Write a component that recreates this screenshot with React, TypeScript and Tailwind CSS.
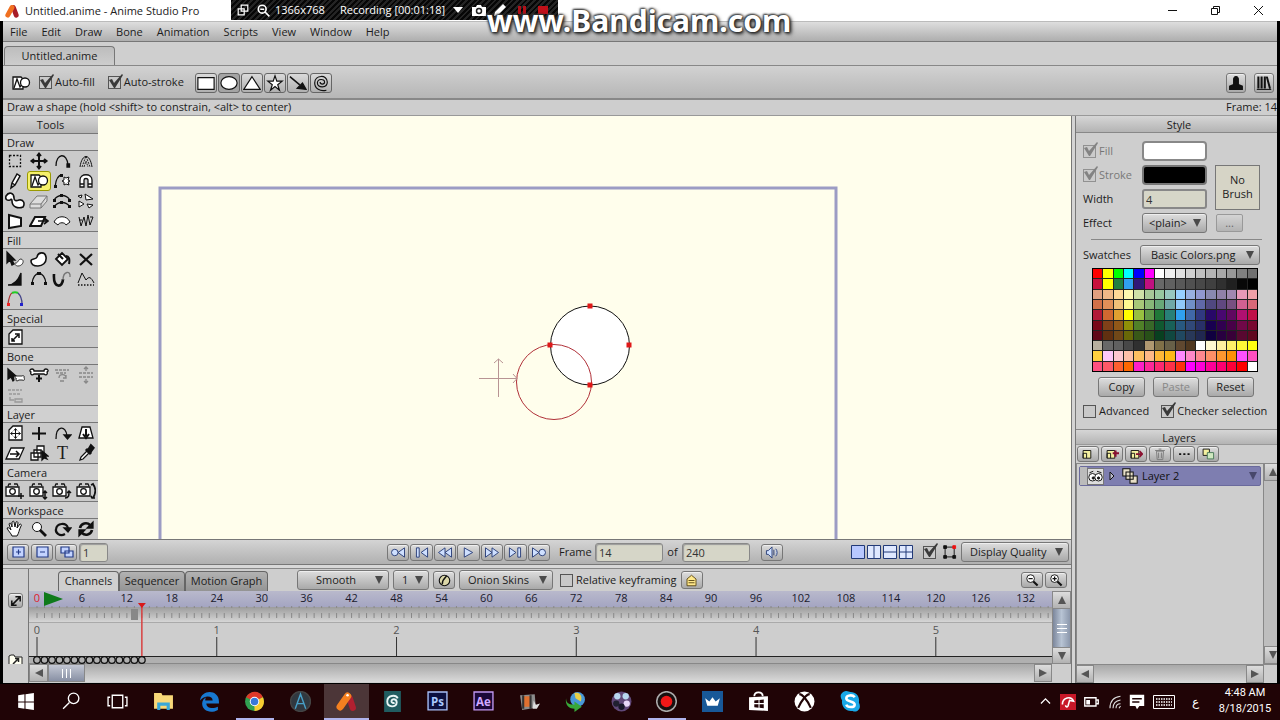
import type { ReactNode } from 'react'
import clsx from 'clsx'

const UI = "font-['Open_Sans','Noto_Sans',sans-serif]"
const RAISED = 'border border-[#777] rounded-[3px] bg-linear-to-b from-[#dedede] to-[#a9a9a9] shadow-[inset_0_1px_0_#eee]'
const HEADER = 'bg-linear-to-b from-[#d6d6d6] to-[#b4b4b4]'

function Svg({ children, className = 'size-5', box = '0 0 20 20' }: { children: ReactNode; className?: string; box?: string }) {
  return (
    <svg viewBox={box} className={clsx('shrink-0', className)} fill="none" stroke="#111" strokeWidth="1.3" aria-hidden="true">
      {children}
    </svg>
  )
}

const shapeGlyph = (
  <>
    <path d="M2 4h8l2 2v10H2z" fill="#fff" />
    <path d="M3 15l3-9 3 8 3-4" />
    <circle cx="14" cy="9.500" r="4.500" fill="#fff" />
  </>
)
const bonePath = 'M3 4c-2 0-3 2-1 3-1 2 1 4 3 2h10c2 2 4 0 3-2 2-1 1-3-1-3-1 0-2 1-2 2H5c0-1-1-2-2-2z'
const camera = (
  <>
    <path d="M1 6h13v9H1zM3 5l1-2h2M9 3h3l1 2" fill="#fff" />
    <circle cx="7.500" cy="10.500" r="2.800" />
  </>
)
const page = <path d="M4 7l4-4h9v14H4z" fill="#fff" />

const GLYPHS: Record<string, ReactNode> = {
  'Select Points': <path d="M4.500 4.500h11v11h-11z" strokeDasharray="2 1.500" />,
  'Transform Points': <path d="M10 3v14M3 10h14M8 5l2-2.500L12 5M8 15l2 2.500 2-2.500M5 8l-2.500 2L5 12M15 8l2.500 2-2.500 2" strokeWidth="2" />,
  'Add Point': <><path d="M4 15C4 2 15 1 16 14" /><path d="M15 13h2.500v3H15z" fill="#111" /></>,
  Curvature: <><path d="M4 16C6 2 14 2 16 16" strokeWidth="1" /><path d="M6 16l4-11 4 11M8 16l2-6 2 6" strokeDasharray="2 1" strokeWidth="0.900" /></>,
  Freehand: <path d="M6 17l1-5 5-9 3 2-5 9zM7 12l3 2" fill="#fff" strokeWidth="1.500" />,
  'Draw Shape': shapeGlyph,
  Scatter: <><path d="M3 16C4 7 6 4 10 4" /><path d="M2 14h3v3H2zM8 3h3v3H8z" fill="#111" stroke="none" /><path d="M12 6l2 1 3-1-1 3 2 1-2 1 1 3-3-1-2 1 0-3-2-1 2-1z" fill="#fff" strokeWidth="1" /></>,
  Magnet: <path d="M4 16V9c0-7 12-7 12 0v7h-4V9c0-2-4-2-4 0v7zM4 13h4M12 13h4" fill="#fff" />,
  'Blob Brush': <path d="M1 5c3-5 8-3 8 2 0 3 2 3 5 2 5-1 6 4 4 7-5 2-11 0-11-6 0-2-1-2-2-1-3 1-5-1-4-4z" fill="#fff" strokeWidth="1.600" />,
  Eraser: <path d="M1 13l7-8h10l-6 8zM1 13v4h11v-4M12 17l6-7V5" fill="#ddd" stroke="#777" strokeWidth="1" />,
  Perspective: <><path d="M2 9c4-6 12-6 16 0M2 16c4-6 12-6 16 0" /><path d="M1 8h3v3H1zM8 3h3v3H8zM16 8h3v3h-3zM1 14h3v3H1zM8 10h3v3H8zM16 14h3v3h-3z" fill="#111" stroke="none" /></>,
  Shatter: <path d="M2 5l4-1-1 3zM9 3l8 5-7 1zM3 10l5 3-5 3zM11 13l6 1-4 3z" fill="#fff" strokeWidth="1" />,
  Shear: <path d="M4 4l12 3v8L4 17z" fill="#fff" strokeWidth="2" />,
  Skew: <><path d="M1 15l5-9h10l-4 9z" fill="#fff" strokeWidth="2" /><path d="M9 10h9M15 7l4 3-4 3" strokeWidth="1.600" /></>,
  Bend: <path d="M2 11c3-7 13-7 16 0l-4 3c-1-3-7-3-8 0z" fill="#fff" strokeWidth="1" />,
  Noise: <path d="M3 6l2 9 3-9 2 9 2-11 2 10 3-8M3 9h3M14 6h3" strokeWidth="1" />,
  'Select Shape': <><path d="M2 3v11l3-3 2 5 2-1-2-4h3z" fill="#111" /><path d="M10 14c3 1 3-4 6-4 4 1 2 7-3 7-2 0-4-2-3-3z" fill="#fff" strokeWidth="0.800" /></>,
  'Create Shape': <path d="M2 12c0-3 5-1 6-4 1-5 8-6 9 0 1 6-4 9-8 9-5 0-7-2-7-5z" fill="#fff" strokeWidth="1.600" />,
  'Paint Bucket': <><path d="M4 10l6-6 6 6-6 6z" fill="#fff" strokeWidth="1.800" /><path d="M6 5l5 5M14 7c3 0 4 3 3 8" strokeWidth="2" /></>,
  'Delete Shape': <path d="M4 5l12 11M16 5L4 16" strokeWidth="2.200" />,
  'Line Width': <path d="M3 16c5 0 10-4 13-12v12z" fill="#111" />,
  'Hide Edge': <><path d="M3 15C4 1 16 1 17 15" /><path d="M2 13h3v3H2zM15 13h3v3h-3zM8 3h4v3H8z" fill="#111" stroke="none" /></>,
  'Stroke Exposure': <><path d="M2 5c-1 15 9 14 9 5" strokeWidth="2.600" /><path d="M11 11c0-9 8-10 7-3" stroke="#777" /></>,
  'Curve Profile': <><path d="M2 14L6 4l4 7c3-4 5-3 8 3" strokeWidth="1" /><path d="M2 16h16" strokeDasharray="1.500 1.500" /></>,
  'Color Points': <><path d="M3 15C4 8 5 5 7 4" stroke="#a33" /><path d="M7 4c2-1 4-1 6 0" stroke="#2c2" strokeWidth="2" /><path d="M13 4c2 2 4 6 4 11" stroke="#448" /><path d="M2 14h3v3H2z" fill="#e22" stroke="none" /><path d="M15 14h3v3h-3z" fill="#22c" stroke="none" /></>,
  'Switch Layer': <>{page}<path d="M7 14l6-6M10 7h4v4M7 11v3h3" strokeWidth="1.500" /></>,
  'Select Bone': <><path d="M3 4v10l3-2 2 4 1-1-1-4h3z" fill="#111" /><path d="M11 11c-2 1-1 2 0 2s-1 3 1 3l2-1h3c3 1 3-1 2-2 1-2-1-3-2-2h-3z" fill="#fff" strokeWidth="0.900" /></>,
  'Add Bone': <><path d={bonePath} fill="#fff" /><path d="M10 10v7M7 13.500h6" strokeWidth="2" /></>,
  'Reparent Bone': <g stroke="#888"><path d="M3 5h14M4 8h10" strokeDasharray="3 1" /><path d="M7 13c0-5 7-4 7 0M14 10v3h-3M8 16h4" /></g>,
  'Bone Strength': <g stroke="#888"><path d="M3 8h14M3 12h14" strokeDasharray="3 1" /><path d="M10 2v4M8 4l2-2 2 2M10 14v4M8 16l2 2 2-2" /></g>,
  'Bind Layer': <g stroke="#999"><path d="M3 5h14M4 9h11" strokeDasharray="3 1" /><path d="M5 12v3h4M10 14h7v3h-7z" /></g>,
  'Transform Layer': <>{page}<path d="M10.500 6v9M6 10.500h9M9 7.500l1.500-2 1.500 2M9 13.500l1.500 2 1.500-2M7.500 9l-2 1.500 2 1.500M13.500 9l2 1.500-2 1.500" strokeWidth="1" /></>,
  'Set Origin': <path d="M10 4v13M3 10.500h14" strokeWidth="2" />,
  'Follow Path': <><path d="M4 16C4 2 14 2 15 13" /><path d="M12 12h7l-3.500 4z" fill="#111" /></>,
  'Rotate Layer': <><path d="M3 15L6 4h8l3 11z" fill="#fff" /><path d="M10 6v7M7 11l3 4 3-4" strokeWidth="2" /></>,
  'Shear Layer': <><path d="M1 16L6 5h13l-5 11z" fill="#fff" /><path d="M5 11h9M11 8l3 3-3 3" strokeWidth="1.500" /></>,
  'Layer Selector': <><path d="M2 10h7v7H2zM5 7h7v7H5zM8 3h7v7H8z" fill="#fff" /><path d="M13 8v9l2-2 3 1-2-3h3z" fill="#111" /></>,
  Eyedropper: <><path d="M4 17l1-3 6-6 2 2-6 6z" fill="#fff" /><path d="M10 6l5 5M12 8l3-5 2 2-3 4z" strokeWidth="3" /></>,
  'Track Camera': <>{camera}<path d="M16 12v6M13 15h6" strokeWidth="1.500" /></>,
  'Zoom Camera': <>{camera}<path d="M16 10v8M14 12l2-2 2 2M14 16l2 2 2-2" strokeWidth="1.500" /></>,
  'Roll Camera': <>{camera}<path d="M13 17c4 0 4-3 4-6M15 12l2-2 2 2" strokeWidth="1.500" /></>,
  'Pan/Tilt Camera': <>{camera}<path d="M17 3c3 4 3 9 0 14M15 4l2-1 1 2M15 15l1 2 3 0" strokeWidth="1.700" /></>,
  Pan: <path d="M7 17c-1-3-4-5-5-8 2-1 3 1 4 2L4 5c1-2 2-1 3 3l0-5c1-1 2-1 2 0l1 5 1-5c1-1 2 0 2 1l-1 5 3-4c1 0 2 1 1 2-2 4-2 7-4 10z" fill="#fff" strokeWidth="1" />,
  Zoom: <><circle cx="8" cy="8" r="4.500" fill="#fff" strokeWidth="1" /><path d="M11 11l6 6" strokeWidth="2.800" /></>,
  'Rotate Workspace': <><path d="M13 15c-5 3-10-1-9-5 1-6 10-7 12-1" strokeWidth="2.200" /><path d="M12 9h7l-3 4z" fill="#111" /></>,
  Orbit: <><path d="M4 9c1-5 7-6 10-3M16 11c-1 5-7 6-10 3" strokeWidth="2.600" /><path d="M17 3v6h-6zM3 17v-6h6z" fill="#111" /></>,
}

const TOOL_GROUPS = [
  { title: 'Draw', tools: ['Select Points', 'Transform Points', 'Add Point', 'Curvature', 'Freehand', 'Draw Shape', 'Scatter', 'Magnet', 'Blob Brush', 'Eraser', 'Perspective', 'Shatter', 'Shear', 'Skew', 'Bend', 'Noise'] },
  { title: 'Fill', tools: ['Select Shape', 'Create Shape', 'Paint Bucket', 'Delete Shape', 'Line Width', 'Hide Edge', 'Stroke Exposure', 'Curve Profile', 'Color Points'] },
  { title: 'Special', tools: ['Switch Layer'] },
  { title: 'Bone', tools: ['Select Bone', 'Add Bone', 'Reparent Bone', 'Bone Strength', 'Bind Layer'] },
  { title: 'Layer', tools: ['Transform Layer', 'Set Origin', 'Follow Path', 'Rotate Layer', 'Shear Layer', 'Layer Selector', 'Text', 'Eyedropper'] },
  { title: 'Camera', tools: ['Track Camera', 'Zoom Camera', 'Roll Camera', 'Pan/Tilt Camera'] },
  { title: 'Workspace', tools: ['Pan', 'Zoom', 'Rotate Workspace', 'Orbit'] },
]

const SWATCHES = [
  'ff0000 ffff00 00ff00 00ffff 0000ff ff00ff ffffff eeeeee e0e0e0 d0d0d0 c0c0c0 b4b4b4 a8a8a8 989898 808080 707070',
  'c8103c ffff00 208040 30a0f0 301878 c01080 686868 606060 585858 505050 484848 404040 303030 202020 080808 000000',
  'e0a080 f0b888 ffd898 fff8b0 d0e0a8 a8c898 98c8a0 98c8c0 98d0ff 98b0e0 9098d0 8888b0 9080a8 a088b0 e898b8 f0a0a8',
  'd07048 e09058 f0c078 fff890 a8c878 88b878 68a878 70a8a8 90c8f8 7090c8 6068a8 504880 604880 785080 d06090 d86878',
  'b01838 d06830 e0a030 ffff00 98c040 609848 207838 288078 30a0f0 4068a8 303880 280868 480870 600860 b01070 c01048',
  '780818 804018 905818 909008 508028 386828 105830 186058 285880 304878 283068 180050 300050 480048 700848 780830',
  '600818 603010 704818 686808 385818 285018 084020 104840 204860 283858 202850 100040 280040 380038 580830 600820',
  'b8b0a0 686868 606060 484848 303030 b09870 807048 686048 604830 503820 ffffff fff8d0 fff0a0 fff068 fff838 ffff10',
  'ffd040 ffc8f8 ffc8d0 ffc0a8 ffc060 ffb888 ffb838 ffb818 ff88ff ff88c8 ff8890 ff9068 ff9830 ff9008 ff50ff ff50c0',
  'ff5080 ff5868 ff6030 ff6800 ff20c8 ff2898 ff2870 ff3048 ff3010 ff00ff ff00d8 ff0098 ff0070 ff0038 ff0000 ffffff',
].flatMap(row => row.split(' '))

const MENUS = ['File', 'Edit', 'Draw', 'Bone', 'Animation', 'Scripts', 'View', 'Window', 'Help']

function Check({ id, label, checked = false, disabled = false }: { id: string; label?: string; checked?: boolean; disabled?: boolean }) {
  return (
    <span className={clsx('flex items-center', disabled && 'opacity-50')}>
      <span className="relative flex size-4 items-center">
        <input id={id} type="checkbox" defaultChecked={checked} aria-label={label ? undefined : id} className="peer size-[13px] appearance-none border border-[#555] bg-[#c9c9c9]" />
        <svg viewBox="0 0 16 16" className="pointer-events-none absolute -top-px left-0 hidden size-4 peer-checked:block" fill="#3a3a3a" aria-hidden="true">
          <path d="M1 6l3-1 2 4 8-9 1 1-8 13H6z" />
        </svg>
      </span>
      {label && <label htmlFor={id} className="whitespace-nowrap">{label}</label>}
    </span>
  )
}

function Dropdown({ label, text, className, pad = 'pl-2' }: { label: string; text: string; className: string; pad?: string }) {
  return (
    <span className={clsx('relative flex h-5 shrink-0', className)}>
      <select aria-label={label} className={clsx(RAISED, pad, 'w-full appearance-none text-[11px] leading-4')}>
        <option>{text}</option>
      </select>
      <svg viewBox="0 0 8 8" className="pointer-events-none absolute top-[6px] right-[6px] size-2" fill="#4a4a4a" aria-hidden="true"><path d="M0 0h8L4 8z" /></svg>
    </span>
  )
}

function IconButton({ label, children, className = 'h-[18px] w-[22px]' }: { label: string; children: ReactNode; className?: string }) {
  return <button type="button" aria-label={label} className={clsx(RAISED, 'flex shrink-0 items-center justify-center', className)}>{children}</button>
}

function NumberBox({ label, value, className }: { label: string; value: string; className: string }) {
  return <input aria-label={label} defaultValue={value} className={clsx('h-[19px] rounded-[3px] border border-[#888] bg-[#d6d6c8] px-[3px] text-[11px] text-[#333] shadow-[inset_1px_1px_1px_#999]', className)} />
}

function Arrow({ dir, className }: { dir: 'up' | 'down' | 'left' | 'right'; className: string }) {
  const d = { up: 'M4 0l4 8H0z', down: 'M0 0h8L4 8z', left: 'M8 0v8L0 4z', right: 'M0 0l8 4-8 4z' }[dir]
  return (
    <button type="button" aria-label={`Scroll ${dir}`} className={clsx('flex shrink-0 items-center justify-center border border-[#888] bg-linear-to-b from-[#ddd] to-[#b2b2b2]', className)}>
      <svg viewBox="0 0 8 8" className="size-2" fill="#555" aria-hidden="true"><path d={d} /></svg>
    </button>
  )
}

function TitleBar() {
  return (
    <header className="relative flex h-[21px] shrink-0 items-center bg-white pr-4 pl-[5px]">
      <Svg className="mr-[6px] size-[14px]">
        <path d="M12 5l4 11" stroke="#a81c28" strokeWidth="7" strokeLinecap="round" />
        <path d="M10 5l-6 11" stroke="#f07020" strokeWidth="7" strokeLinecap="round" />
      </Svg>
      <h1 className="pt-px text-[11px] text-[#222]">Untitled.anime - Anime Studio Pro</h1>
      <div className="ml-auto flex items-center gap-8">
        <button type="button" aria-label="Minimize" className="size-[11px]"><Svg className="size-[11px]" box="0 0 11 11"><path d="M1 5.500h9" strokeWidth="1" /></Svg></button>
        <button type="button" aria-label="Restore" className="size-[11px]"><Svg className="size-[11px]" box="0 0 11 11"><path d="M1.500 3.500h6v6h-6zM3.500 3V1.500h6v6H8" strokeWidth="1" /></Svg></button>
        <button type="button" aria-label="Close" className="size-[11px]"><Svg className="size-[11px]" box="0 0 11 11"><path d="M1 1l9 9M10 1l-9 9" strokeWidth="1" /></Svg></button>
      </div>

      {/* Recorder strip floating over the window title */}
      <div className="absolute top-0 left-[231px] flex h-5 w-[327px] items-center bg-[repeating-linear-gradient(135deg,#060606_0_2px,#242424_2px_4px)] pl-[6px] text-[11px] text-white">
        <Svg className="size-[12px]"><g stroke="#fff" strokeWidth="2"><path d="M7 2h11v10H7z" /><path d="M2 8h10v10H2z" /></g></Svg>
        <Svg className="ml-2 size-[13px]"><g stroke="#fff" strokeWidth="2.500"><circle cx="8" cy="8" r="6" /><path d="M12 12l7 7M5 8h6" /></g></Svg>
        <span className="ml-[5px] w-[65px] pt-px">1366x768</span>
        <span className="w-[113px] pt-px whitespace-nowrap">Recording [00:01:18]</span>
        <svg viewBox="0 0 10 6" className="h-[6px] w-[10px]" fill="#fff" aria-hidden="true"><path d="M0 0h10L5 6z" /></svg>
        <svg viewBox="0 0 14 11" className="ml-[9px] h-[11px] w-[14px]" aria-hidden="true"><path d="M0 2h4l1-2h4l1 2h4v9H0z" fill="#fff" /><circle cx="7" cy="6" r="2.500" fill="none" stroke="#222" strokeWidth="1.500" /></svg>
        <svg viewBox="0 0 12 12" className="ml-2 size-3" aria-hidden="true"><path d="M0 12l1-4 8-8 3 3-8 8z" fill="#fff" /></svg>
        <svg viewBox="0 0 8 8" className="ml-3 size-2" aria-hidden="true"><path d="M0 0h3v8H0zM5 0h3v8H5z" fill="#b01018" /></svg>
        <svg viewBox="0 0 10 8" className="ml-3 h-2 w-[10px]" aria-hidden="true"><path d="M0 0h10v8H0z" fill="#c01018" /></svg>
      </div>
      <p className="absolute top-1 left-[487px] z-10 font-['Noto_Sans','Open_Sans',sans-serif] text-[30px] leading-[34px] font-bold text-white [text-shadow:0_0_3px_#222,1px_1px_3px_#222,2px_2px_4px_#444,-1px_-1px_2px_#555]">www.Bandicam.com</p>
    </header>
  )
}

function Toolbar() {
  const shapes = [
    { name: 'Rectangle', art: <path d="M1 4h18v13H1z" fill="#fff" /> },
    { name: 'Oval', art: <ellipse cx="10" cy="10" rx="9" ry="7" fill="#fff" /> },
    { name: 'Triangle', art: <path d="M10 3l9 14H1z" fill="#fff" /> },
    { name: 'Star', art: <path d="M10 2l2 6h6l-5 4 2 6-5-4-5 4 2-6-5-4h6z" fill="#fff" /> },
    { name: 'Arrow', art: <><path d="M1 3l11 9" strokeWidth="1.700" /><path d="M19 17l-10-1 6-6z" fill="#111" /></> },
    { name: 'Spiral', art: <path d="M16 18c-7 2-13-2-13-8C3 1 17 0 17 9c0 7-11 7-11 1 0-5 8-5 8-1 0 3-5 3-5 0" /> },
  ]
  return (
    <div className="flex h-[34px] shrink-0 items-center border-b-2 border-[#888] bg-linear-to-b from-[#d2d2d2] to-[#b6b6b6] pt-px pr-[3px] pl-2 text-[11px]">
      <Svg className="mr-2 size-5">{shapeGlyph}</Svg>
      <Check id="auto-fill" label="Auto-fill" checked />
      <span className="w-[13px]" />
      <Check id="auto-stroke" label="Auto-stroke" checked />
      <div className="ml-[11px] flex gap-px">
        {shapes.map(s => (
          <button
            key={s.name}
            type="button"
            aria-label={s.name}
            className={clsx('flex h-5 w-[22px] items-center justify-center rounded-[3px] border border-[#666]', s.name === 'Oval' ? 'bg-[#a4a4a4]' : 'bg-linear-to-b from-[#dadada] to-[#b0b0b0]')}
          >
            <Svg className="size-[18px]">{s.art}</Svg>
          </button>
        ))}
      </div>
      <div className="ml-auto flex gap-2">
        <IconButton label="Character wizard" className="size-5">
          <Svg className="size-4"><path d="M2 18v-4l5-2V7c-1-7 7-7 6 0v5l5 2v4z" fill="#111" /></Svg>
        </IconButton>
        <IconButton label="Library" className="size-5">
          <Svg className="size-4"><path d="M1 18h18" /><path d="M3 2v15M7 2v15M11 2v15" strokeWidth="2.600" /><path d="M14 2l4 15M17 17L13 2" strokeWidth="1.500" /></Svg>
        </IconButton>
      </div>
    </div>
  )
}

function ToolPanel() {
  return (
    <aside className="w-[95px] shrink-0 bg-[#cacaca] text-[11px] shadow-[1px_0_0_#888]">
      <h2 className={clsx(HEADER, 'h-[17px] text-center leading-[18px]')}>Tools</h2>
      {TOOL_GROUPS.map(group => (
        <section key={group.title}>
          <h3 className="h-[18px] border-y border-[#777] bg-[#d0d0d0] pl-1 leading-[18px]">{group.title}</h3>
          <div className="grid grid-cols-4">
            {group.tools.map(tool => (
              <button
                key={tool}
                type="button"
                aria-label={tool === 'Text' ? undefined : tool}
                className={clsx('flex h-5 items-center justify-center rounded-[3px]', tool === 'Draw Shape' && 'border border-[#999900] bg-[#f5f06c]')}
              >
                {tool === 'Text'
                  ? <span className="font-['Liberation_Serif',serif] text-[18px] leading-5">T</span>
                  : <Svg>{GLYPHS[tool]}</Svg>}
              </button>
            ))}
          </div>
        </section>
      ))}
    </aside>
  )
}

function Canvas() {
  const points = [[492, 190], [452, 229], [531, 229], [492, 269]]
  return (
    <main className="relative flex-1 overflow-hidden bg-[#fffeec]">
      <svg className="absolute inset-0 h-full w-full" fill="none" aria-label="Artwork">
        <rect x="62" y="72" width="676" height="500" stroke="#9c9cc4" strokeWidth="3" />
        <circle cx="492" cy="229.500" r="39.500" fill="#fff" stroke="#111" />
        <circle cx="456" cy="266" r="37.500" stroke="#b03038" />
        <path d="M381 262.500h38M415 258l4 4.500-4 4.500M400.500 281v-38M396 247l4.500-4 4.500 4" stroke="#b89494" />
        {points.map(([x, y]) => <rect key={`${x}-${y}`} x={x - 2.5} y={y - 2.5} width="5" height="5" fill="#e01818" />)}
      </svg>
    </main>
  )
}

function PlaybackBar() {
  const transport = [
    { name: 'Rewind', d: 'M15 2v10L8 7z', extra: <circle cx="4.500" cy="7" r="3.500" /> },
    { name: 'Previous keyframe', d: 'M2 2h3v10H2zM14 2v10L7 7z' },
    { name: 'Step back', d: 'M8 2v10L1 7zM15 2v10L8 7z' },
    { name: 'Play', d: 'M4 2l9 5-9 5z' },
    { name: 'Step forward', d: 'M1 2l7 5-7 5zM8 2l7 5-7 5z' },
    { name: 'Next keyframe', d: 'M2 2l7 5-7 5zM11 2h3v10h-3z' },
    { name: 'Jump to end', d: 'M1 2l7 5-7 5z', extra: <circle cx="11.500" cy="7" r="3.500" /> },
  ]
  const views = ['', 'M7 1v12', 'M1 7h12', 'M7 1v12M1 7h12']
  return (
    <div className="flex h-[26px] shrink-0 items-center border-y border-[#777] bg-linear-to-b from-[#d4d4d4] to-[#b0b0b0] pr-[2px] pl-1 text-[11px]">
      <div className="flex items-center gap-[2px]">
        {[['Add', 'M2 1h11v10H2zM5 6h5M7.500 3.500v5'], ['Remove', 'M2 1h11v10H2zM5 6h5'], ['Duplicate', 'M2 1h8v6H2zM6 5h8v6H6z']].map(([name, d]) => (
          <IconButton key={name} label={name} className="h-[17px] w-[22px]">
            <svg viewBox="0 0 15 12" className="h-3 w-[15px]" fill="#c4d4ff" stroke="#223a88" strokeWidth="1.200" aria-hidden="true"><path d={d} /></svg>
          </IconButton>
        ))}
        <NumberBox label="Page" value="1" className="w-[29px]" />
      </div>
      <div className="ml-[279px] flex items-center">
        <div className="grid w-[163px] grid-cols-7 gap-px">
          {transport.map(b => (
            <IconButton key={b.name} label={b.name} className="h-[17px]">
              <svg viewBox="0 0 16 14" className="h-[13px] w-4" fill="#cfe0ff" stroke="#283c78" aria-hidden="true"><path d={b.d} />{b.extra}</svg>
            </IconButton>
          ))}
        </div>
        <span className="ml-[9px] w-9">Frame</span>
        <NumberBox label="Current frame" value="14" className="w-[68px]" />
        <span className="w-[19px] text-center">of</span>
        <NumberBox label="Total frames" value="240" className="w-[68px]" />
        <span className="w-[11px]" />
        <IconButton label="Sound" className="h-[17px] w-[22px]">
          <svg viewBox="0 0 16 14" className="h-[13px] w-4" fill="#cfe0ff" stroke="#283c78" aria-hidden="true"><path d="M2 5h2l4-4v12L4 9H2zM10 4v6M12 3c2 2 2 6 0 8" /></svg>
        </IconButton>
      </div>
      <div className="ml-auto flex items-center">
        <div className="flex gap-[2px]">
          {views.map((d, i) => (
            <button key={d} type="button" aria-label={`View layout ${i + 1}`} className="size-[14px]">
              <svg viewBox="0 0 14 14" className="size-[14px]" stroke="#223a78" fill={i === 0 ? '#b8c8ff' : '#dfe8ff'} aria-hidden="true"><path d="M0.500 0.500h13v13h-13z" /><path d={d} /></svg>
            </button>
          ))}
        </div>
        <span className="w-[10px]" />
        <Check id="Show path" checked />
        <Svg className="mx-1 size-[14px]"><path d="M3 3h13v14H3z" /><path d="M1 1h4v4H1zM1 15h4v4H1zM14 15h4v4h-4z" fill="#111" /><path d="M14 1h4v4h-4z" fill="#e11" stroke="#e11" /></Svg>
        <Dropdown label="Display quality" text="Display Quality" className="w-[108px]" />
      </div>
    </div>
  )
}

function Ruler() {
  const x = (frame: number) => 8 + frame * 7.49
  const frames = Array.from({ length: 137 }, (_, i) => i)
  return (
    <svg className="h-[73px] min-w-0 flex-1 text-[11px]" aria-label="Timeline">
      <defs>
        <linearGradient id="band" x1="0" x2="0" y1="0" y2="1">
          <stop offset="0" stopColor="#b9b9cc" />
          <stop offset="1" stopColor="#a4a5c2" />
        </linearGradient>
        <linearGradient id="ticks" x1="0" x2="0" y1="0" y2="1">
          <stop offset="0" stopColor="#9c9c9c" />
          <stop offset="1" stopColor="#d6d6d6" />
        </linearGradient>
      </defs>
      <rect width="100%" height="16" fill="url(#band)" />
      <rect y="16" width="100%" height="15" fill="url(#ticks)" />
      <rect y="31" width="100%" height="1" fill="#aaa" />
      <rect y="66" width="100%" height="7" fill="#b0b0b0" />
      <rect y="65" width="100%" height="1" fill="#222" />
      <rect y="72" width="100%" height="1" fill="#888" />
      {frames.map(f => (
        <path key={f} d={`M${x(f)} 15v2M${x(f)} 22v5`} stroke="#888" />
      ))}
      {frames.filter(f => f % 6 === 0 && f <= 132).map(f => (
        <text key={f} x={x(f)} y="11" textAnchor="middle" fill={f === 0 ? '#e0202c' : '#1a1a2c'}>{f}</text>
      ))}
      {[0, 1, 2, 3, 4, 5].map(s => (
        <g key={s}>
          <text x={x(s * 24)} y="43" textAnchor="middle" fill="#555">{s}</text>
          <path d={`M${x(s * 24)} 46v19`} stroke="#333" />
        </g>
      ))}
      <path d="M15 1l19 7-19 7z" fill="#0f7a1c" />
      <rect x="102" y="18" width="7" height="11" fill="#888" />
      {frames.slice(0, 15).map(f => (
        <circle key={f} cx={x(f)} cy="69" r="3.300" fill="#b0b0b0" stroke="#111" strokeWidth="1.300" />
      ))}
      <path d={`M${x(14)} 15v50`} stroke="#d84040" strokeWidth="1.500" />
      <path d={`M${x(14) - 4} 12h8l-4 5z`} fill="#d81818" />
    </svg>
  )
}

function Timeline() {
  return (
    <div className="flex h-[115px] shrink-0 border-t border-[#888] text-[11px]">
      <div className="flex w-[26px] shrink-0 flex-col items-center justify-between border-r border-[#777] pt-[24px] pb-[19px]">
        <IconButton label="Expand timeline" className="size-[15px]">
          <Svg className="size-3"><path d="M4 16L16 4M9 3h8v8M3 9v8h8" strokeWidth="2.500" /></Svg>
        </IconButton>
        <svg viewBox="0 0 15 10" className="h-[10px] w-[15px]" fill="#fffff0" stroke="#222" aria-hidden="true"><path d="M1 12V2l2-1h3l1 2h7v9" /><path d="M5 10l5-5M7 4.500h3.500V8" strokeWidth="1.500" /></svg>
      </div>
      <div className="flex min-w-0 flex-1 flex-col">
        <div className="flex h-[22px] shrink-0 items-center pr-1">
          <div className="ml-[29px] flex h-full items-end" role="tablist">
            {['Channels', 'Sequencer', 'Motion Graph'].map((tab, i) => (
              <button
                key={tab}
                type="button"
                role="tab"
                aria-selected={i === 0}
                className={clsx(
                  'h-5 rounded-t-[4px] border border-b-0 border-[#666] whitespace-nowrap',
                  i === 0 ? 'w-[61px] bg-[#cfcfcf]' : 'bg-linear-to-b from-[#b2b2b2] to-[#949494]',
                  i === 1 && 'w-[66px]',
                  i === 2 && 'w-[83px]',
                )}
              >
                {tab}
              </button>
            ))}
          </div>
          <div className="ml-[29px] flex items-center gap-1">
            <Dropdown label="Interpolation" text="Smooth" className="w-[92px]" pad="pl-[18px]" />
            <Dropdown label="Interval" text="1" className="w-9" />
            <IconButton label="Onion skin toggle">
              <Svg className="size-[15px]"><circle cx="10" cy="10" r="7" fill="#dcd8a8" strokeWidth="1.500" /><path d="M7 15c0-6 3-8 6-11" strokeWidth="2" /></Svg>
            </IconButton>
            <Dropdown label="Onion skins" text="Onion Skins" className="w-[94px]" />
          </div>
          <span className="w-[7px]" />
          <Check id="relative" label="Relative keyframing" />
          <span className="w-1" />
          <IconButton label="Key settings">
            <Svg className="size-[15px]"><path d="M4 8l6-5 6 5v9H4zM6 10h8M6 13h8" fill="#ffe88a" stroke="#64501c" /></Svg>
          </IconButton>
          <div className="ml-auto flex gap-[2px]">
            {['Zoom out', 'Zoom in'].map(name => (
              <IconButton key={name} label={name} className="h-4 w-[22px]">
                <Svg className="size-[14px]"><circle cx="8" cy="8" r="5.500" fill="#fff" /><path d="M12 12l6 6" strokeWidth="3" /><path d={name === 'Zoom in' ? 'M5 8h6M8 5v6' : 'M5 8h6'} strokeWidth="1.800" /></Svg>
              </IconButton>
            ))}
          </div>
        </div>
        <div className="flex">
          <Ruler />
          <div className="flex w-[19px] flex-col">
            <Arrow dir="up" className="h-[18px] w-full" />
            <div className="flex flex-1 flex-col items-center justify-center gap-[3px] border-x border-[#888] bg-linear-to-r from-[#7c879c] via-[#b8c4d4] to-[#8c98ac]">
              <i className="h-px w-[10px] bg-white" /><i className="h-px w-[10px] bg-white" /><i className="h-px w-[10px] bg-white" />
            </div>
            <Arrow dir="down" className="h-[17px] w-full" />
          </div>
        </div>
        <div className="flex h-[18px] pr-[19px]">
          <Arrow dir="left" className="w-[19px]" />
          <div className="flex flex-1 bg-linear-to-b from-[#a8a8a8] to-[#dadada]">
            <div className="flex w-[37px] items-center justify-center gap-[3px] border border-[#888] bg-linear-to-b from-[#c4c8d4] to-[#8890a4]">
              <i className="h-[9px] w-px bg-white" /><i className="h-[9px] w-px bg-white" /><i className="h-[9px] w-px bg-white" />
            </div>
          </div>
          <Arrow dir="right" className="w-[18px]" />
        </div>
      </div>
    </div>
  )
}

function StylePanel() {
  return (
    <section className="flex flex-col text-[11px]">
      <h2 className={clsx(HEADER, 'h-[17px] border-b border-[#888] pl-[5px] text-center leading-[18px]')}>Style</h2>
      <div className="flex flex-col px-[7px] pt-[6px]">
        <div className="grid auto-rows-[24px] grid-cols-[59px_65px_54px] items-center">
          <Check id="fill" label="Fill" checked disabled />
          <button type="button" aria-label="Fill colour" className="h-5 rounded-[4px] border-2 border-[#888] bg-white" />
          <span />
          <Check id="stroke" label="Stroke" checked disabled />
          <button type="button" aria-label="Stroke colour" className="h-5 rounded-[4px] border-2 border-[#777] bg-black" />
          <button type="button" className="row-span-2 ml-2 h-[45px] w-[45px] border border-[#777] bg-[#d6d4c6] leading-[14px]">No Brush</button>
          <label htmlFor="width">Width</label>
          <input id="width" defaultValue="4" className="h-5 w-full rounded-[3px] border-2 border-[#888] bg-[#d6d6c8] px-[2px] text-[#333]" />
          <span>Effect</span>
          <Dropdown label="Effect" text="<plain>" className="w-full" pad="pl-[6px]" />
          <button type="button" className="ml-[9px] h-[18px] w-[27px] rounded-[2px] border border-[#999] bg-linear-to-b from-[#d4d4d4] to-[#b4b4b4] leading-[12px] text-[#666]">...</button>
        </div>
        <hr className="mx-2 mt-1 mb-[5px] border-[#888]" />
        <div className="flex items-center justify-between pr-[10px]">
          <span>Swatches</span>
          <Dropdown label="Swatches" text="Basic Colors.png" className="w-[120px]" pad="pl-[10px]" />
        </div>
        <div className="mt-[3px] ml-[9px] grid h-[104px] w-[166px] grid-cols-16 grid-rows-10 gap-px border border-black bg-[#222]">
          {SWATCHES.map((color, i) => (
            <button key={i} type="button" aria-label={`#${color}`} style={{ backgroundColor: `#${color}` }} />
          ))}
        </div>
        <div className="mt-[5px] ml-[15px] flex gap-2">
          <button type="button" className={clsx(RAISED, 'h-5 w-[47px] border-[#555]')}>Copy</button>
          <button type="button" disabled className={clsx(RAISED, 'h-5 w-[46px] text-[#888]')}>Paste</button>
          <button type="button" className={clsx(RAISED, 'h-5 w-[47px] border-[#555]')}>Reset</button>
        </div>
        <div className="mt-[6px] mb-[10px] flex h-4 gap-3">
          <Check id="advanced" label="Advanced" />
          <Check id="checker" label="Checker selection" checked />
        </div>
      </div>
    </section>
  )
}

function LayersPanel() {
  const sheet = <path d="M3 5h11v11H3zM3 16V9h5v7" fill="#f4f0a0" />
  const actions = [
    { name: 'New layer', art: sheet },
    { name: 'Add layer', art: <>{sheet}<path d="M15 5v9M11 9h9" stroke="#8a1030" strokeWidth="3" /></> },
    { name: 'Insert layer', art: <>{sheet}<path d="M10 10h9M15 6l4 4-4 4" stroke="#8a1030" strokeWidth="2.500" /></> },
    { name: 'Delete layer', art: <g stroke="#777"><path d="M5 6h10l-1 12H6zM3 5h14M8 3h4M8 8v8M12 8v8" /></g> },
    { name: 'More', art: <path d="M3 10h3M9 10h3M15 10h3" strokeWidth="2.500" /> },
    { name: 'Duplicate layer', art: <><path d="M3 3h9v9H3z" fill="#f4f0a0" /><path d="M9 8h9v9H9z" fill="#cfe8c0" stroke="#475" /></> },
  ]
  return (
    <section className="flex flex-1 flex-col border-t border-[#888] text-[11px]">
      <h2 className={clsx(HEADER, 'h-[15px] border-b border-[#999] pl-[5px] text-center leading-[15px]')}>Layers</h2>
      <div className="flex gap-[2px] py-px pl-px">
        {actions.map(a => (
          <IconButton key={a.name} label={a.name} className="h-4 w-[22px]"><Svg className="size-[14px]">{a.art}</Svg></IconButton>
        ))}
      </div>
      <div className="flex flex-1">
        <div className="flex-1 border-t border-l border-[#888] bg-[#cecece] px-[2px] pt-[2px]">
          <div className="flex h-5 items-center rounded-[2px] border border-[#6a6a9c] bg-[#7e7eb0]">
            <span className="h-full w-[7px] bg-[#bbb]" />
            <button type="button" aria-label="Layer visibility" className="flex size-[17px] items-center justify-center border border-[#777] bg-[#ddd]">
              <Svg className="size-[15px]"><ellipse cx="6" cy="11" rx="5" ry="5" fill="#fff" /><ellipse cx="14" cy="11" rx="5" ry="5" fill="#fff" /><circle cx="7" cy="12" r="1.500" fill="#111" /><circle cx="14" cy="12" r="1.500" fill="#111" /><path d="M2 5l5-2M12 3l6 2" /></Svg>
            </button>
            <svg viewBox="0 0 6 10" className="ml-[5px] h-[10px] w-[6px]" stroke="#111" fill="#bbc" aria-hidden="true"><path d="M1 1l4 4-4 4z" /></svg>
            <Svg className="ml-[7px] size-4"><path d="M1 1h9v9H1zM5 5h9v9H5zM10 10h9v9h-9z" fill="#e8e0c8" /></Svg>
            <span className="ml-1 flex-1 text-[#111]">Layer 2</span>
            <svg viewBox="0 0 8 8" className="mr-[3px] size-2" fill="#48486c" aria-hidden="true"><path d="M0 0h8L4 8z" /></svg>
          </div>
        </div>
        <div className="flex w-[14px] flex-col overflow-hidden border-l border-[#888] bg-[#bebebe]">
          <Arrow dir="up" className="h-[18px] w-[17px]" />
          <div className="flex-1" />
          <Arrow dir="down" className="h-[18px] w-[17px]" />
        </div>
      </div>
      <div className="flex h-[19px] border-t border-[#888] pr-[13px]">
        <Arrow dir="left" className="w-[18px]" />
        <div className="flex-1 bg-linear-to-b from-[#a8a8a8] to-[#dadada]" />
        <Arrow dir="right" className="w-[18px]" />
      </div>
    </section>
  )
}

const APPS: { name: string; state?: 'open' | 'active'; art: ReactNode }[] = [
  { name: 'Start', art: <path d="M3 4l6-1v7H3zM10 3l8-1v8h-8zM3 11h6v6l-6-1zM10 11h8v7l-8-1z" fill="#fff" stroke="none" /> },
  { name: 'Search', art: <g stroke="#fff"><circle cx="12" cy="7" r="5" /><path d="M8 11l-6 6" /></g> },
  { name: 'Task view', art: <path d="M5 4h10v12H5zM3 6H1v8h2M17 6h2v8h-2" stroke="#fff" /> },
  { name: 'Files', art: <><path d="M1 2h7l1 2h10v13H1z" fill="#f8d878" stroke="none" /><path d="M4 18v-7h12v7h-3v-4H7v4z" fill="#38a8d8" stroke="none" /></> },
  { name: 'Edge', art: <path d="M1 9C2-2 19-2 19 10v2H7c0 5 7 5 11 3v3c-7 4-15 1-15-6 0-3 2-5 4-6-1 1-1 2-1 3h7c0-5-8-5-12 0z" fill="#1878d0" stroke="none" /> },
  { name: 'Chrome', state: 'open', art: <g stroke="none"><circle cx="10" cy="10" r="9" fill="#30a050" /><path d="M10 10L2 6c4-7 13-7 16 0z" fill="#e03828" /><path d="M10 10l8-4c3 6-1 13-8 13z" fill="#f8cc30" /><circle cx="10" cy="10" r="4.500" fill="#fff" /><circle cx="10" cy="10" r="3.600" fill="#3878d8" /></g> },
  { name: 'Studio launcher', art: <><circle cx="10" cy="10" r="9.500" fill="#303840" stroke="#444" /><path d="M5 17L10 3l5 14M7 12h6" stroke="#48a0c8" /></> },
  { name: 'Anime Studio', state: 'active', art: <g strokeLinecap="round"><path d="M13 7l3 9" stroke="#b02030" strokeWidth="6" /><path d="M11 5L4 15" stroke="#f58020" strokeWidth="7" /><circle cx="11" cy="4" r="1.200" fill="#fff" stroke="none" /></g> },
  { name: 'Graphics', art: <><path d="M2 0h16v20H2z" fill="#205c60" stroke="none" /><path d="M15 7c-2-4-10-3-10 3s9 6 9 1c0-4-5-4-5-1 0 1 2 2 3 1" stroke="#e8f4f4" strokeWidth="1.800" /></> },
  { name: 'Photoshop', art: <><path d="M1 1h18v17H1z" fill="#0c1040" stroke="#a8c0f8" /><text x="10" y="14" textAnchor="middle" fontSize="11" fontWeight="bold" fill="#a8c8ff" stroke="none">Ps</text></> },
  { name: 'After Effects', art: <><path d="M1 1h18v17H1z" fill="#1c0838" stroke="#c098f0" /><text x="10" y="14" textAnchor="middle" fontSize="11" fontWeight="bold" fill="#d0a8ff" stroke="none">Ae</text></> },
  { name: 'Film', art: <g stroke="none"><path d="M1 4l14-1 1 13-13 2z" fill="#8c8c8c" /><path d="M4 5h7v10H4z" fill="#e07030" /><path d="M3 4h2v13H3zM10 4h2v13h-2z" fill="#333" /><path d="M13 17l1-8 2 4 4-1-3 5z" fill="#ddd" /></g> },
  { name: 'Download manager', art: <g stroke="none"><circle cx="12" cy="8" r="7" fill="#4898d8" /><path d="M9 2c5-2 8 3 6 8l-5-3z" fill="#e8d048" /><path d="M1 7c0 6 5 6 8 6v-3l7 5-7 5v-3C3 17 0 13 1 7z" fill="#38a838" /></g> },
  { name: 'Media', art: <g stroke="none"><circle cx="10" cy="10" r="9.500" fill="#604878" /><circle cx="6" cy="5" r="3" fill="#b8d8f0" /><circle cx="14" cy="5" r="3" fill="#b8d8f0" /><circle cx="5" cy="12" r="3" fill="#202030" /><circle cx="15" cy="12" r="3" fill="#e8d8f8" /><circle cx="10" cy="15" r="3" fill="#181828" /></g> },
  { name: 'Recorder', state: 'open', art: <><circle cx="10" cy="10" r="9.300" fill="#181010" stroke="#aaa" strokeWidth="1.500" /><circle cx="10" cy="10" r="5.500" fill="#f01818" stroke="none" /></> },
  { name: 'King', art: <><path d="M0 0h20v20H0z" fill="#185898" stroke="none" /><path d="M5 14L3 7l4 3 3-4 3 4 4-3-2 7z" fill="#fff" stroke="none" /></> },
  { name: 'Store', art: <><path d="M1 6l18-1v14l-18-1z" fill="#fff" stroke="none" /><path d="M6 5c0-5 8-5 8 0" stroke="#fff" strokeWidth="1.700" /><path d="M6 9l4-.500v3H6zM11 8.500l4-.500v3.500h-4zM6 12.500h4v3.500l-4-.500zM11 12.500h4v4l-4-.500z" fill="#200406" stroke="none" /></> },
  { name: 'Xbox', art: <><circle cx="10" cy="10" r="9.500" fill="#fff" stroke="none" /><path d="M5 3c3 0 8 6 11 13M15 3c-3 0-8 6-11 13" stroke="#200406" strokeWidth="2" /></> },
  { name: 'Skype', art: <><path d="M3 1c4-2 5 0 7 0 6 0 9 5 8 10 3 6-2 10-6 8C5 20 1 14 2 9 0 6 0 3 3 1z" fill="#18a8e8" stroke="none" /><path d="M14 6c-2-3-8-2-8 1 0 4 8 2 8 6 0 3-7 3-8 0" stroke="#fff" strokeWidth="2.400" /></> },
]

function Taskbar() {
  return (
    <footer className="flex h-[37px] shrink-0 justify-between border-t border-black bg-[#200406] px-[3px] text-white">
      <nav className="grid w-[870px] grid-cols-19" aria-label="Taskbar">
        {APPS.map(app => (
          <button
            key={app.name}
            type="button"
            aria-label={app.name}
            className={clsx('relative flex items-center justify-center pb-[2px]', app.state === 'active' && 'bg-[#4c3638]')}
          >
            <Svg className="size-[21px]">{app.art}</Svg>
            {app.state && <span className={clsx('absolute bottom-0 h-[2px] bg-[#b0b4ec]', app.state === 'active' ? 'inset-x-0' : 'inset-x-1')} />}
          </button>
        ))}
      </nav>
      <div className="flex items-center pb-px">
        <Svg className="size-[13px]"><path d="M3 13l7-7 7 7" stroke="#fff" strokeWidth="2" /></Svg>
        <Svg className="ml-2 size-4"><path d="M0 0h20v20H0z" fill="#c81828" stroke="none" /><path d="M3 13C3 4 14 2 17 9l-5-1-2 7c-1 2-3 1-3-1" stroke="#fff" strokeWidth="2" /></Svg>
        <Svg className="ml-2 size-[15px]"><path d="M1 5h15v11H1zM17 8h2v5h-2" stroke="#fff" strokeWidth="1.800" /><path d="M3 8h5v6H3z" fill="#fff" stroke="none" /></Svg>
        <Svg className="ml-2 size-[15px]"><path d="M4 19C4 10 9 4 18 3M8 19c0-6 4-10 10-11M12 19c0-4 2-6 6-6M16 19l2-3" stroke="#ddd" strokeWidth="1.500" /></Svg>
        <Svg className="ml-[7px] size-4"><path d="M1 1h18v14h-6l-3 4-2-4H1z" fill="#fff" stroke="none" /><path d="M4 6h12M4 10h9" stroke="#200406" strokeWidth="2" /></Svg>
        <svg viewBox="0 0 22 14" className="ml-2 h-[14px] w-[22px]" fill="none" stroke="#fff" aria-hidden="true"><path d="M0.500 0.500h21v13h-21z" /><path d="M3 4h16M3 7h16M3 10h16" strokeDasharray="1.500 1" strokeWidth="1.500" /></svg>
        <span className="ml-[17px] text-[12px]" lang="ar">ع</span>
        <time className="ml-4 w-[62px] pr-[2px] pb-px text-center font-['Roboto',sans-serif] text-[11px] leading-4">4:48 AM<br />8/18/2015</time>
      </div>
    </footer>
  )
}

export default function App() {
  return (
    <div className={clsx(UI, 'flex min-h-screen flex-col bg-black text-[#1c1c1c]')}>
      <TitleBar />
      <div className="mx-[3px] flex flex-1 flex-col bg-[#cecece]">
        <nav className="flex h-[21px] shrink-0 items-center gap-[14px] border-y border-t-[#bbb] border-b-[#777] bg-linear-to-b from-[#dedede] to-[#aeaeae] pt-[2px] pl-[7px] text-[11px]" aria-label="Menu">
          {MENUS.map(m => <button key={m} type="button">{m}</button>)}
        </nav>
        <div className="flex h-6 shrink-0 items-end border-b border-[#888] bg-[#cfcfcf] pl-px text-[11px]">
          <button type="button" className="h-[19px] w-[111px] rounded-t-[4px] border border-b-0 border-[#777] bg-linear-to-b from-[#bdbdbd] to-[#cdcdcd] pt-px">Untitled.anime</button>
        </div>
        <Toolbar />
        <div className="flex h-4 shrink-0 items-center justify-between overflow-hidden border-b border-[#999] bg-[#cecece] pl-1 text-[11px] whitespace-nowrap">
          <span>Draw a shape (hold &lt;shift&gt; to constrain, &lt;alt&gt; to center)</span>
          <span>Frame: 14</span>
        </div>
        <div className="flex flex-1">
          <div className="flex min-w-0 flex-1 flex-col">
            <div className="flex flex-1">
              <ToolPanel />
              <Canvas />
            </div>
            <PlaybackBar />
            <div className="h-[3px] bg-[#d8d8d8]" />
            <Timeline />
          </div>
          <div className="w-[5px] shrink-0 border-x border-[#777] bg-[#d4d4d4]" />
          <aside className="flex w-[201px] shrink-0 flex-col">
            <StylePanel />
            <LayersPanel />
          </aside>
        </div>
      </div>
      <Taskbar />
    </div>
  )
}
